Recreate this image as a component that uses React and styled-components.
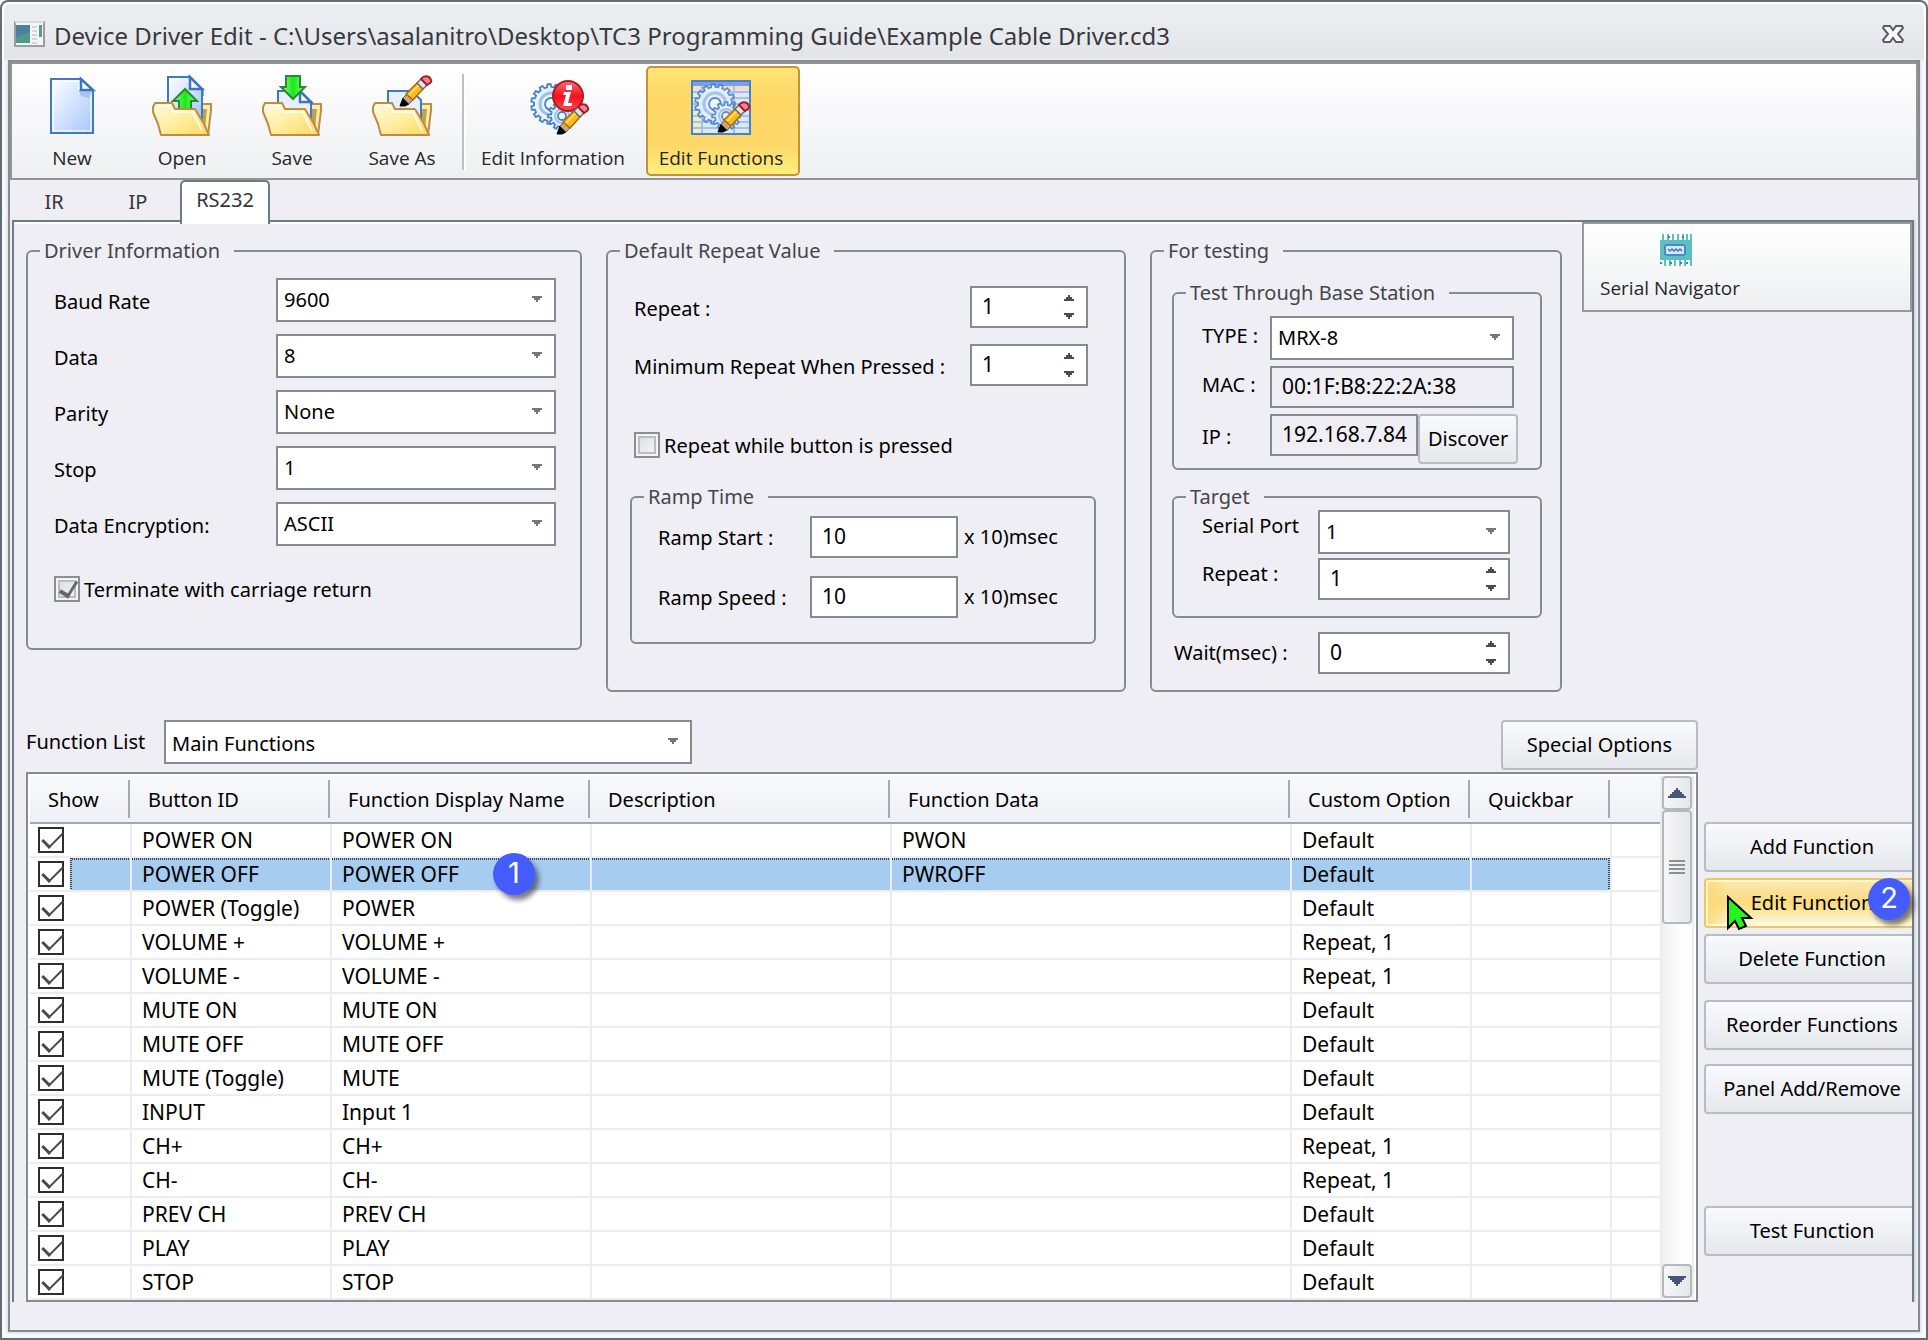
import React from 'react';
import styled, { createGlobalStyle, css } from 'styled-components';

const ui = '"Noto Sans", "Open Sans", sans-serif';
const line = '#868b90';
const face = '#eeeef4';

const Global = createGlobalStyle`
  * { box-sizing: border-box; }
  body { margin: 0; background: #fff; font: 20px/26px ${ui}; color: #000; }
  button, input, select { font: inherit; color: inherit; margin: 0; }
`;

/* ---------- window chrome ---------- */

const Window = styled.div`
  min-height: 100vh;
  display: flex;
  flex-direction: column;
  border: 2px solid #636d77;
  border-radius: 8px 8px 0 0;
  background: #f8f8fb;
`;

const TitleBar = styled.header`
  display: flex;
  align-items: center;
  gap: 9px;
  height: 58px;
  padding: 4px 20px 0 10px;
  border: 2px solid #fff;
  border-bottom: 0;
  border-radius: 8px 8px 0 0;
  background: linear-gradient(#ecedf1, #e9ecef 40%, #e2e3e7);
`;

const Title = styled.h1`
  flex: 1;
  margin: 0;
  padding-top: 4px;
  font: 24px/32px ${ui};
  color: #38393d;
`;

const CloseButton = styled.button`
  display: flex;
  padding: 0;
  border: 0;
  background: none;
`;

const Frame = styled.main`
  flex: 1;
  margin: 0 6px 6px;
  padding-bottom: 28px;
  border: 2px solid #858b93;
  box-shadow: 0 0 0 2px #e9e9ef;
  background: ${face};
`;

/* ---------- toolbar ---------- */

const Toolbar = styled.nav`
  display: flex;
  height: 118px;
  padding-left: 5px;
  border: 2px solid #939494;
  background: linear-gradient(#fff, #f8f8fa 45%, #eef0f1);
`;

const ToolButton = styled.button`
  width: ${p => p.$wide || 110}px;
  display: flex;
  flex-direction: column;
  align-items: center;
  gap: 9px;
  padding: 10px 0 0;
  border: 0;
  background: none;
  font: 19px/26px "Open Sans", ${ui};
  color: #26272b;
  ${p => p.$active && css`
    margin: 2px 0 2px 6px;
    padding: 6px 4px 0 0;
    border: 2px solid #c4923a;
    border-radius: 5px;
    background: linear-gradient(#fee577, #fed766 30%, #fdd96a 75%, #fff07c);
  `}
`;

const ToolDivider = styled.span`
  width: 4px;
  margin: 10px 0 8px 5px;
  border-left: 2px solid #bdc0c6;
  border-right: 2px solid #fff;
`;

/* ---------- tabs and page ---------- */

const Tabs = styled.div`
  display: flex;
  height: 40px;
  padding-left: 2px;
`;

const Tab = styled.button`
  width: ${p => (p.$active ? 90 : 84)}px;
  height: 44px;
  padding: 0;
  border: 0;
  background: none;
  line-height: 40px;
  color: #34363a;
  ${p => p.$active && css`
    position: relative;
    border: 2px solid #6c7b84;
    border-bottom: 0;
    border-radius: 5px 5px 0 0;
    background: #fff;
    line-height: 36px;
    padding-bottom: 6px;
  `}
`;

const Page = styled.section`
  margin: 0 4px 0 2px;
  border: 2px solid #6c7b84;
  border-bottom: 0;
  box-shadow: inset 0 2px 0 #fff, 2px 0 0 #d9dbe5;
`;

const Upper = styled.div`
  display: flex;
  gap: 20px;
  padding-left: 12px;
`;

const Groups = styled.div`
  display: flex;
  align-items: flex-start;
  gap: 24px;
  padding-top: 16px;
`;

const Group = styled.fieldset`
  width: ${p => (p.$width ? p.$width + 'px' : 'auto')};
  min-width: 0;
  margin: 0;
  padding: 0;
  border: 2px solid ${line};
  border-radius: 6px;
`;

const Legend = styled.legend`
  margin-left: 12px;
  padding: 0 14px 0 4px;
  color: #43464a;
`;

const Label = styled.label`
  padding-top: 2px;
  white-space: nowrap;
`;

const DriverBody = styled.div`
  display: grid;
  grid-template-columns: 222px 1fr;
  row-gap: 12px;
  align-items: center;
  padding: 14px 24px 46px 26px;
  > ${Label} { padding-top: 4px; }
`;

const CheckLine = styled.div`
  display: flex;
  align-items: center;
  gap: 4px;
  height: 26px;
  margin-top: ${p => p.$gap}px;
  grid-column: 1 / -1;
`;

const RepeatBody = styled.div`
  padding: 22px 28px 46px 22px;
`;

const SpinRow = styled.div`
  display: grid;
  grid-template-columns: 1fr 118px;
  align-items: center;
  padding: 0 8px 16px 4px;
  > ${Label} { padding-top: 4px; }
`;

const RepeatChecks = styled.div`
  padding: 0 0 26px 4px;
`;

const RampBody = styled.div`
  display: grid;
  grid-template-columns: 146px 148px 1fr;
  gap: 18px 6px;
  align-items: center;
  padding: 6px 0 24px 26px;
`;

const TestBody = styled.div`
  padding: 16px 18px 16px 20px;
`;

const StationBody = styled.div`
  display: grid;
  grid-template-columns: 62px 1fr;
  gap: 6px;
  align-items: center;
  padding: 10px 26px 4px 28px;
  > ${Label} { padding: 0 0 4px; }
`;

const AddressLine = styled.div`
  display: flex;
  align-items: flex-start;
  margin-right: -4px;
`;

const TargetGroup = styled(Group)`
  margin-top: 14px;
`;

const TargetBody = styled.div`
  display: grid;
  grid-template-columns: 116px 1fr;
  row-gap: 4px;
  padding: 0 30px 16px 28px;
  > ${Label} { padding: 0; line-height: 32px; }
`;

const WaitLine = styled.div`
  display: grid;
  grid-template-columns: 144px 1fr;
  align-items: center;
  margin-top: 14px;
  padding: 0 32px 0 2px;
  > ${Label} { padding: 0; }
`;

/* ---------- controls ---------- */

const Field = styled.span`
  position: relative;
  display: block;
  width: ${p => (p.$width ? p.$width + 'px' : 'auto')};
  max-width: 100%;
`;

const fieldBox = css`
  display: block;
  width: 100%;
  border: 2px solid ${line};
  border-radius: 0;
  outline: 0;
  appearance: none;
  background: #fff;
`;

const Dropdown = styled.select`
  ${fieldBox}
  height: 44px;
  padding: 0 30px 0 6px;
`;

const TextInput = styled.input`
  ${fieldBox}
  width: ${p => (p.$width ? p.$width + 'px' : '100%')};
  height: 42px;
  padding: 0 0 2px 10px;
  font-size: 21px;
  background: ${p => (p.readOnly ? face : '#fff')};
`;

const NumberInput = styled(TextInput)`
  appearance: textfield;
  &::-webkit-inner-spin-button { appearance: none; margin: 0; }
`;

const Arrow = styled.svg`
  position: absolute;
  right: 13px;
  top: 18px;
  pointer-events: none;
`;

const Steps = styled.span`
  position: absolute;
  top: 2px;
  right: 10px;
  bottom: 2px;
  display: flex;
  flex-direction: column;
  justify-content: space-evenly;
`;

const Step = styled.button`
  display: flex;
  padding: 5px 4px;
  border: 0;
  background: none;
`;

const Check = styled.input`
  appearance: none;
  flex: none;
  display: block;
  position: relative;
  width: 26px;
  height: 26px;
  border: 2px solid #2e2e30;
  background: #fff;
  &:checked::before {
    content: '';
    position: absolute;
    left: 2px;
    top: 3px;
    width: 18px;
    height: 9px;
    border: solid #48484a;
    border-width: 0 0 2px 3px;
    transform: rotate(-45deg);
  }
`;

const SoftCheck = styled(Check)`
  border-color: #8c8f91;
  background: linear-gradient(135deg, #d9dde0, #f7f7f8);
  box-shadow: inset 0 0 0 2px #f3f3f5, inset 0 0 0 4px #b9bdc0;
  &:checked::before {
    left: 7px;
    top: 0;
    width: 8px;
    height: 15px;
    border-color: #66696c;
    border-width: 0 3px 4px 0;
    transform: rotate(32deg);
  }
`;

const Button = styled.button`
  height: 50px;
  padding: 0 ${p => p.$pad || 0}px;
  border: 2px solid #b9bdc2;
  border-radius: 4px;
  background: linear-gradient(#f8fafd, #eff1f5 50%, #e5e9eb);
  white-space: nowrap;
`;

/* ---------- serial navigator ---------- */

const Navigator = styled.div`
  flex: 1;
  align-self: flex-start;
  display: flex;
  height: 90px;
  border: 2px solid #989999;
  background: linear-gradient(#fff, #eeeff1);
`;

const NavigatorButton = styled.button`
  display: flex;
  flex-direction: column;
  gap: 9px;
  padding: 10px 0 0 16px;
  border: 0;
  background: none;
  font: 19px/26px "Open Sans", ${ui};
  color: #26272b;
  svg { margin-left: 60px; }
`;

/* ---------- function list ---------- */

const Lower = styled.div`
  display: grid;
  grid-template-columns: 1fr 208px;
  column-gap: 6px;
  padding: 28px 0 0 12px;
`;

const ListBar = styled.div`
  display: flex;
  align-items: flex-start;
  margin-bottom: 2px;
  line-height: 44px;
`;

const ListLabel = styled.label`
  width: 138px;
`;

const OptionsButton = styled(Button)`
  margin-left: auto;
`;

const ListBox = styled.div`
  display: flex;
  padding: 2px 2px 0;
  border: 2px solid ${line};
  background: #fff;
`;

const Table = styled.table`
  flex: 1;
  width: 0;
  table-layout: fixed;
  border-collapse: separate;
  border-spacing: 0;
  text-align: left;
`;

const Col = styled.col`
  width: ${p => (p.$width ? p.$width + 'px' : 'auto')};
`;

const HeadText = styled.div`
  height: 38px;
  padding-left: 16px;
  border-right: 2px solid #a3aab6;
  line-height: 40px;
  white-space: nowrap;
`;

const HeadCell = styled.th`
  height: 48px;
  padding: 4px 2px 4px 0;
  border-bottom: 2px solid #a3aab6;
  background: linear-gradient(#f8f9fb, #eef1f5);
  font-weight: 400;
  &:first-child ${HeadText} { padding-left: 18px; }
`;

const dots = 'repeating-linear-gradient(90deg, #4a4643 0 1px, #a6ccf0 1px 2px)';
const sideDots = 'repeating-linear-gradient(#4a4643 0 1px, #a6ccf0 1px 2px)';

const Cell = styled.td`
  position: relative;
  height: 34px;
  padding: 0 0 0 ${p => (p.$check ? 8 : 10)}px;
  border: solid #ececf3;
  border-width: 0 2px 2px 0;
  font-size: 21px;
  line-height: 32px;
  white-space: nowrap;
`;

const Row = styled.tr`
  ${p => p.$selected && css`
    ${Cell} { background: ${dots} top / 100% 2px no-repeat, #a6ccf0; }
    ${Cell}:first-child {
      background:
        linear-gradient(#fff, #fff) left / 40px 100% no-repeat,
        ${sideDots} 40px 0 / 2px 100% no-repeat,
        ${dots} top / 100% 2px no-repeat, #a6ccf0;
    }
    ${Cell}:nth-last-child(2) {
      background: ${sideDots} right / 2px 100% no-repeat, ${dots} top / 100% 2px no-repeat, #a6ccf0;
    }
    ${Cell}:last-child { background: #fff; }
  `}
  ${Cell}:last-child { border-right: 0; }
`;

const Badge = styled.span`
  position: absolute;
  z-index: 1;
  ${p => (p.$inRow ? 'left: 161px; top: -5px;' : 'right: 2px; top: 0;')}
  width: 42px;
  height: 42px;
  border-radius: 50%;
  background: #445cfd;
  box-shadow: 4px 5px 5px rgba(40, 40, 60, 0.6);
  color: #fff;
  font: 29px/40px Inter, ${ui};
  text-align: center;
`;

const ScrollBar = styled.div`
  width: 34px;
  display: flex;
  flex-direction: column;
  border: solid #ececf0;
  border-width: 0 2px;
  background: linear-gradient(90deg, #f1f1f2, #fdfdfd 60%);
`;

const ScrollButton = styled.button`
  display: flex;
  align-items: center;
  justify-content: center;
  height: ${p => (p.$thumb ? 114 : 34)}px;
  margin-top: ${p => (p.$last ? 'auto' : 0)};
  margin-bottom: ${p => (p.$last ? 2 : 0)}px;
  padding: 0;
  border: 2px solid #b5b9be;
  border-radius: 4px;
  background: linear-gradient(90deg, #f6f6f8, #e6e7e9);
`;

const Actions = styled.aside`
  display: flex;
  flex-direction: column;
  gap: 6px;
  padding-top: 102px;
`;

const ActionSlot = styled.div`
  position: relative;
  margin-top: ${p => p.$before || 0}px;
`;

const ActionButton = styled(Button)`
  display: block;
  width: 100%;
  padding-left: 6px;
  border-right: 0;
  border-radius: 4px 0 0 4px;
  ${p => p.$hot && css`
    border-color: #eec95a;
    background: linear-gradient(90deg, #fbd978, rgba(251, 221, 130, 0) 12%),
      linear-gradient(#fbeab4, #fbdb82 45%, #fbe08d 60%, #fffbe6);
    box-shadow: inset 2px 2px 0 #fff6d6, inset 0 -2px 0 #fffbe8;
  `}
`;

const Cursor = styled.svg`
  position: absolute;
  left: 22px;
  top: 16px;
`;

/* ---------- drawings ---------- */

function gear(cx, cy, outer, inner, teeth) {
  const pts = [];
  for (let i = 0; i < teeth; i++) {
    [[-0.3, inner], [-0.2, outer], [0.2, outer], [0.3, inner]].forEach(([o, r]) => {
      const a = ((i + o) / teeth) * Math.PI * 2;
      pts.push((cx + Math.cos(a) * r).toFixed(1) + ' ' + (cy + Math.sin(a) * r).toFixed(1));
    });
  }
  return 'M' + pts.join('L') + 'Z';
}

const Gradients = ({ id }) => (
  <defs>
    <linearGradient id={id + 'paper'} x1="0" y1="0" x2="1" y2="1">
      <stop offset="0" stopColor="#fff" /><stop offset="1" stopColor="#a5c6fb" />
    </linearGradient>
    <linearGradient id={id + 'folder'} x1="0" y1="0" x2="1" y2="1">
      <stop offset="0" stopColor="#fffbe0" /><stop offset="0.55" stopColor="#ffec9c" /><stop offset="1" stopColor="#ffd75e" />
    </linearGradient>
    <linearGradient id={id + 'green'} x1="0" y1="0" x2="1" y2="0">
      <stop offset="0" stopColor="#a8f0a0" /><stop offset="0.5" stopColor="#14ec14" /><stop offset="1" stopColor="#8ff08a" />
    </linearGradient>
    <linearGradient id={id + 'red'} x1="0" y1="0" x2="0" y2="1">
      <stop offset="0" stopColor="#f4747c" /><stop offset="0.5" stopColor="#f5101c" /><stop offset="1" stopColor="#fb4a52" />
    </linearGradient>
  </defs>
);

const Pencil = ({ x, y }) => (
  <g transform={`translate(${x} ${y})`}>
    <path d="M0 30l3-8 6 6-4 2z" fill="#000" stroke="#000" />
    <path d="M3 22l4-4 6 6-4 4z" fill="#c9a77c" stroke="#7a5a34" strokeWidth="1" />
    <path d="M6 18L17 7l6 6-10 11z" fill="#ffb81c" stroke="#a86a08" strokeWidth="1.5" />
    <path d="M9 19L19 9" stroke="#ffdc5c" strokeWidth="2" />
    <path d="M17 7l4-4 6 6-4 4z" fill="#e4e4e4" stroke="#6c6c6c" strokeWidth="1.5" />
    <path d="M21 3q3-4 8-2 4 4 1 6l-3 2z" fill="#e98a90" stroke="#a81c26" strokeWidth="2" />
  </g>
);

const NewIcon = () => (
  <svg width="60" height="62" viewBox="0 0 60 62">
    <Gradients id="n" />
    <path d="M9 5h30l12 12v42H9z" fill="url(#npaper)" stroke="#4079c6" strokeWidth="2" />
    <path d="M11 7h26v12h12v38H11z" fill="none" stroke="#fff" strokeOpacity="0.6" strokeWidth="2" />
    <path d="M36 16l3 6 8 2 3-7z" fill="#a8c4ea" />
    <path d="M39 5v11h12z" fill="#fff" stroke="#3a74c4" strokeWidth="2.5" />
  </svg>
);

const FolderIcon = ({ kind }) => (
  <svg width="62" height="62" viewBox="0 0 62 62">
    <Gradients id={kind} />
    <path d="M44 30h16v6l-3 25H44z" fill="#ffedb0" stroke="#bf8c45" strokeWidth="2" />
    <path d="M48 35h8l-2 21h-6z" fill="#bda44c" />
    {kind === 'open' && <path d="M50 14h3v8h-3z" fill="#5ac4c4" />}
    {kind === 'open'
      ? <path d="M17 34V3h22l12 13v28H17z" fill="url(#openpaper)" stroke="#3f78c4" strokeWidth="2" />
      : <path d={kind === 'as' ? 'M17 34V17h24l9 9v22H17z' : 'M17 34V17h22l11 11v20H17z'} fill="#e8effc" stroke="#3f78c4" strokeWidth="2" />}
    {kind === 'open' && <path d="M39 3v12h12z" fill="#fff" stroke="#3a74c4" strokeWidth="2.5" />}
    {kind === 'save' && <path d="M39 17v11h11z" fill="#fff" stroke="#3a74c4" strokeWidth="2.5" />}
    {kind === 'open' && <path d="M34 15l12 12h-6v10H28V27h-6z" fill="url(#opengreen)" stroke="#2a8a30" strokeWidth="2" />}
    <path d="M4 29h17l3 6h20l9 15 5 11H10L7 50 2 38v-5z" fill={`url(#${kind}folder)`} stroke="#bf8c45" strokeWidth="2" strokeLinejoin="round" />
    <path d="M5 32h14l4 6h19l9 19" fill="none" stroke="#fffbe4" strokeWidth="2" />
    {kind === 'save' && <path d="M25 2h14v11h5L32 25 20 13h5z" fill="url(#savegreen)" stroke="#2a8a30" strokeWidth="2" />}
    {kind === 'as' && <Pencil x="29" y="2" />}
  </svg>
);

const Gears = () => (
  <g fill="#e8f1fd" stroke="#4a82c8" strokeWidth="1.8">
    <path d={gear(20, 24, 20, 17, 15)} />
    <circle cx="20" cy="24" r="11" stroke="#9fc0ea" strokeWidth="3" fill="none" />
    <circle cx="20" cy="24" r="6" fill="#f6faff" />
    <path d={gear(31, 36, 14, 11, 12)} />
    <circle cx="31" cy="36" r="7" stroke="#9fc0ea" strokeWidth="2" fill="none" />
    <circle cx="31" cy="36" r="4" fill="#f6faff" />
  </g>
);

const InfoIcon = () => (
  <svg width="46" height="62" viewBox="0 0 46 62" overflow="visible">
    <Gradients id="i" />
    <g transform="translate(1 6)"><Gears /></g>
    <circle cx="38" cy="22" r="15" fill="url(#ired)" stroke="#b01822" strokeWidth="2" />
    <path d="M36 11h6v5h-6zM34 18h7l-3 11h4v3h-9l3-11h-3z" fill="#fff" />
    <Pencil x="27" y="30" />
  </svg>
);

const FunctionsIcon = () => (
  <svg width="60" height="62" viewBox="0 0 60 62">
    <rect x="1" y="7" width="58" height="53" fill="#dce8fb" stroke="#4a80c8" strokeWidth="2" />
    <path d="M2 8h56v4H2z" fill="#7ba0ea" />
    <path d="M2 12h56v4H2z" fill="#f6dcc0" />
    <path d="M2 17h9v42H2z" fill="#e9eec4" />
    <path d="M2 18h56M2 24h56M2 30h56M2 36h56M2 42h56M2 48h56M2 54h56M11 12v47M43 12v47" stroke="#a6c0e6" strokeWidth="2" />
    <g transform="translate(4 6)" opacity="0.85"><Gears /></g>
    <Pencil x="27" y="28" />
  </svg>
);

const AppIcon = () => (
  <svg width="31" height="26" viewBox="0 0 31 26">
    <rect x="1" y="1" width="29" height="24" fill="#f4f5f6" stroke="#9b9da0" strokeWidth="2" />
    <path d="M1 1h29" stroke="#d8dadd" strokeWidth="2" />
    <path d="M2 4h14v18H2z" fill="#4f9a86" />
    <path d="M2 4h14v7L2 16z" fill="#4c80a0" />
    <path d="M18 6h5M18 10h5M18 14h5M18 18h5M18 22h5" stroke="#b4b6b8" />
    <path d="M25 4h3v12h-3z" fill="#5a9a94" />
  </svg>
);

const CloseIcon = () => (
  <svg width="22" height="18" viewBox="0 0 22 18">
    <path d="M2 1h6l3 4 3-4h6l1 2-5 6 5 6-1 2h-6l-3-4-3 4H2l-1-2 5-6-5-6z" fill="#fafbfc" stroke="#585b6c" strokeWidth="2" />
  </svg>
);

const ChipIcon = () => (
  <svg width="32" height="32" viewBox="0 0 32 32">
    <path d="M3 0v7M8 0v7M13 0v7M18 0v7M23 0v7M27 0v7M31 0v7M5 25v7M10 25v7M15 25v7M20 25v7M25 25v7M31 25v7" stroke="#5cc0c0" strokeWidth="2" />
    <path d="M9 2v2M23 2v2M1 28v2M11 28v2M21 28v2M27 28v2" stroke="#3f7cc4" strokeWidth="2" />
    <rect y="6" width="32" height="20" fill="#5cc0c0" />
    <rect x="5" y="11" width="20" height="10" rx="2" fill="#d8e8fb" stroke="#4a88cc" strokeWidth="2" />
    <path d="M8 15l2 2 2-2 2 2 2-2 2 2 2-2 2 2" fill="none" stroke="#3f78c4" strokeWidth="1.5" />
  </svg>
);

/* ---------- composed controls ---------- */

const Choice = ({ id, value, width }) => (
  <Field $width={width}>
    <Dropdown id={id} defaultValue={value}>
      <option>{value}</option>
    </Dropdown>
    <Arrow width="12" height="6" viewBox="0 0 12 6"><path d="M1 0h10v2H9v2H7v2H5V4H3V2H1z" fill="#74777a" /></Arrow>
  </Field>
);

const Spinner = ({ id, value }) => (
  <Field>
    <NumberInput id={id} type="number" defaultValue={value} />
    <Steps>
      <Step type="button" aria-label="Increase"><svg width="10" height="6" viewBox="0 0 10 6"><path d="M0 6V4h2V2h2V0h2v2h2v2h2v2z" fill="#474d57" /></svg></Step>
      <Step type="button" aria-label="Decrease"><svg width="10" height="6" viewBox="0 0 10 6"><path d="M0 0v2h2v2h2v2h2V4h2V2h2V0z" fill="#474d57" /></svg></Step>
    </Steps>
  </Field>
);

const driverFields = [
  ['baud', 'Baud Rate', '9600'],
  ['data', 'Data', '8'],
  ['parity', 'Parity', 'None'],
  ['stop', 'Stop', '1'],
  ['encryption', 'Data Encryption:', 'ASCII'],
];

const columns = [
  ['Show', 102], ['Button ID', 200], ['Function Display Name', 260], ['Description', 300],
  ['Function Data', 0], ['Custom Option', 180], ['Quickbar', 140],
];

const rows = [
  ['POWER ON', 'POWER ON', 'PWON', 'Default'],
  ['POWER OFF', 'POWER OFF', 'PWROFF', 'Default'],
  ['POWER (Toggle)', 'POWER', '', 'Default'],
  ['VOLUME +', 'VOLUME +', '', 'Repeat, 1'],
  ['VOLUME -', 'VOLUME -', '', 'Repeat, 1'],
  ['MUTE ON', 'MUTE ON', '', 'Default'],
  ['MUTE OFF', 'MUTE OFF', '', 'Default'],
  ['MUTE (Toggle)', 'MUTE', '', 'Default'],
  ['INPUT', 'Input 1', '', 'Default'],
  ['CH+', 'CH+', '', 'Repeat, 1'],
  ['CH-', 'CH-', '', 'Repeat, 1'],
  ['PREV CH', 'PREV CH', '', 'Default'],
  ['PLAY', 'PLAY', '', 'Default'],
  ['STOP', 'STOP', '', 'Default'],
];

export default function App() {
  return (
    <>
      <Global />
      <Window>
        <TitleBar>
          <AppIcon />
          <Title>Device Driver Edit - C:\Users\asalanitro\Desktop\TC3 Programming Guide\Example Cable Driver.cd3</Title>
          <CloseButton aria-label="Close"><CloseIcon /></CloseButton>
        </TitleBar>
        <Frame>
          <Toolbar>
            <ToolButton><NewIcon />New</ToolButton>
            <ToolButton><FolderIcon kind="open" />Open</ToolButton>
            <ToolButton><FolderIcon kind="save" />Save</ToolButton>
            <ToolButton><FolderIcon kind="as" />Save As</ToolButton>
            <ToolDivider />
            <ToolButton $wide={174}><InfoIcon />Edit Information</ToolButton>
            <ToolButton $wide={154} $active><FunctionsIcon />Edit Functions</ToolButton>
          </Toolbar>
          <Tabs>
            <Tab>IR</Tab>
            <Tab>IP</Tab>
            <Tab $active>RS232</Tab>
          </Tabs>
          <Page>
            <Upper>
              <Groups>
                <Group $width={556}>
                  <Legend>Driver Information</Legend>
                  <DriverBody>
                    {driverFields.map(([id, label, value]) => (
                      <React.Fragment key={id}>
                        <Label htmlFor={id}>{label}</Label>
                        <Choice id={id} value={value} />
                      </React.Fragment>
                    ))}
                    <CheckLine $gap={18}>
                      <SoftCheck type="checkbox" id="terminate" defaultChecked />
                      <Label htmlFor="terminate">Terminate with carriage return</Label>
                    </CheckLine>
                  </DriverBody>
                </Group>

                <Group $width={520}>
                  <Legend>Default Repeat Value</Legend>
                  <RepeatBody>
                    <SpinRow>
                      <Label htmlFor="repeat">Repeat :</Label>
                      <Spinner id="repeat" value="1" />
                    </SpinRow>
                    <SpinRow>
                      <Label htmlFor="minimum">Minimum Repeat When Pressed :</Label>
                      <Spinner id="minimum" value="1" />
                    </SpinRow>
                    <RepeatChecks>
                      <CheckLine $gap={30}>
                        <SoftCheck type="checkbox" id="while" />
                        <Label htmlFor="while">Repeat while button is pressed</Label>
                      </CheckLine>
                    </RepeatChecks>
                    <Group>
                      <Legend>Ramp Time</Legend>
                      <RampBody>
                        <Label htmlFor="start">Ramp Start :</Label>
                        <TextInput id="start" defaultValue="10" />
                        <span>x 10)msec</span>
                        <Label htmlFor="speed">Ramp Speed :</Label>
                        <TextInput id="speed" defaultValue="10" />
                        <span>x 10)msec</span>
                      </RampBody>
                    </Group>
                  </RepeatBody>
                </Group>

                <Group $width={412}>
                  <Legend>For testing</Legend>
                  <TestBody>
                    <Group>
                      <Legend>Test Through Base Station</Legend>
                      <StationBody>
                        <Label htmlFor="type">TYPE :</Label>
                        <Choice id="type" value="MRX-8" />
                        <Label htmlFor="mac">MAC :</Label>
                        <TextInput id="mac" readOnly value="00:1F:B8:22:2A:38" />
                        <Label htmlFor="ip">IP :</Label>
                        <AddressLine>
                          <TextInput id="ip" readOnly value="192.168.7.84" $width={148} />
                          <Button $pad={8}>Discover</Button>
                        </AddressLine>
                      </StationBody>
                    </Group>
                    <TargetGroup>
                      <Legend>Target</Legend>
                      <TargetBody>
                        <Label htmlFor="port">Serial Port</Label>
                        <Choice id="port" value="1" />
                        <Label htmlFor="target-repeat">Repeat :</Label>
                        <Spinner id="target-repeat" value="1" />
                      </TargetBody>
                    </TargetGroup>
                    <WaitLine>
                      <Label htmlFor="wait">Wait(msec) :</Label>
                      <Spinner id="wait" value="0" />
                    </WaitLine>
                  </TestBody>
                </Group>
              </Groups>
              <Navigator>
                <NavigatorButton><ChipIcon />Serial Navigator</NavigatorButton>
              </Navigator>
            </Upper>

            <Lower>
              <div>
                <ListBar>
                  <ListLabel htmlFor="list">Function List</ListLabel>
                  <Choice id="list" value="Main Functions" width={528} />
                  <OptionsButton $pad={24}>Special Options</OptionsButton>
                </ListBar>
                <ListBox>
                  <Table>
                    <colgroup>
                      {columns.map(([name, width]) => <Col key={name} $width={width} />)}
                      <Col $width={48} />
                    </colgroup>
                    <thead>
                      <tr>
                        {columns.map(([name]) => <HeadCell key={name}><HeadText>{name}</HeadText></HeadCell>)}
                        <HeadCell />
                      </tr>
                    </thead>
                    <tbody>
                      {rows.map(([id, display, data, option], i) => (
                        <Row key={id} $selected={i === 1}>
                          <Cell $check><Check type="checkbox" defaultChecked aria-label={'Show ' + id} /></Cell>
                          <Cell>{id}</Cell>
                          <Cell>{display}{i === 1 && <Badge $inRow>1</Badge>}</Cell>
                          <Cell />
                          <Cell>{data}</Cell>
                          <Cell>{option}</Cell>
                          <Cell />
                          <Cell />
                        </Row>
                      ))}
                    </tbody>
                  </Table>
                  <ScrollBar>
                    <ScrollButton aria-label="Scroll up">
                      <svg width="18" height="10" viewBox="0 0 18 10"><path d="M0 10V8h2V6h2V4h2V2h2V0h2v2h2v2h2v2h2v2h2v2z" fill="#4a5678" /></svg>
                    </ScrollButton>
                    <ScrollButton aria-label="Scroll position" $thumb>
                      <svg width="16" height="14" viewBox="0 0 16 14"><path d="M0 1h16M0 5h16M0 9h16M0 13h16" stroke="#8d8f93" strokeWidth="2" /></svg>
                    </ScrollButton>
                    <ScrollButton aria-label="Scroll down" $last>
                      <svg width="18" height="10" viewBox="0 0 18 10"><path d="M0 0v2h2v2h2v2h2v2h2v2h2V8h2V6h2V4h2V2h2V0z" fill="#46547c" /></svg>
                    </ScrollButton>
                  </ScrollBar>
                </ListBox>
              </div>
              <Actions>
                <ActionSlot><ActionButton>Add Function</ActionButton></ActionSlot>
                <ActionSlot>
                  <ActionButton $hot>Edit Function</ActionButton>
                  <Badge>2</Badge>
                  <Cursor width="28" height="38" viewBox="0 0 28 38">
                    <path d="M2 3v31l7-7 4 8 7-3-4-8h9z" fill="#22f81e" stroke="#000" strokeWidth="2" />
                  </Cursor>
                </ActionSlot>
                <ActionSlot><ActionButton>Delete Function</ActionButton></ActionSlot>
                <ActionSlot $before={10}><ActionButton>Reorder Functions</ActionButton></ActionSlot>
                <ActionSlot $before={8}><ActionButton>Panel Add/Remove</ActionButton></ActionSlot>
                <ActionSlot $before={86}><ActionButton>Test Function</ActionButton></ActionSlot>
              </Actions>
            </Lower>
          </Page>
        </Frame>
      </Window>
    </>
  );
}
